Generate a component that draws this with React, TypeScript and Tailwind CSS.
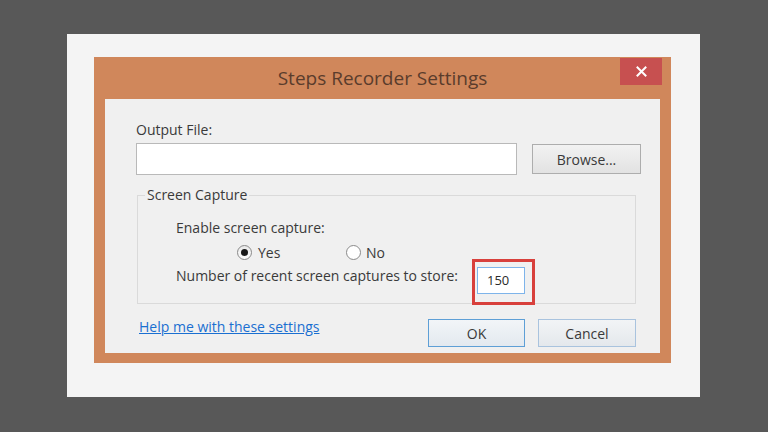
export default function App() {
  const font = { fontFamily: '"Open Sans", "Noto Sans", sans-serif' };

  return (
    <div
      className="w-[768px] h-[432px] bg-[#585858] pl-[67px] pt-[34px] text-[14px] text-[#3a3a3a]"
      style={font}
    >
      {/* Light page panel */}
      <div className="w-[633px] h-[363px] bg-[#f4f4f4] pl-[27px] pt-[23px]">
        {/* Dialog window */}
        <div className="w-[577px] h-[306px] bg-[#d0875b] flex flex-col px-[11px] pb-[10px]">
          {/* Title bar */}
          <div className="relative h-[42px] flex items-center justify-center">
            <span className="text-[19px] text-[#5a3c2c] leading-none">Steps Recorder Settings</span>
            <button className="absolute right-[-2px] top-[1px] w-[42px] h-[27px] bg-[#c75050] flex items-center justify-center">
              <svg width="11" height="11" viewBox="0 0 11 11">
                <path d="M1.5 1.5l8 8M9.5 1.5l-8 8" stroke="white" strokeWidth="2" strokeLinecap="square" />
              </svg>
            </button>
          </div>

          {/* Client area */}
          <div className="flex-1 bg-[#f0f0f0] pl-[31px] pt-[22px]">
            <div className="leading-[18px]">Output File:</div>
            <div className="mt-[4px] flex items-start gap-[15px]">
              <div className="w-[381px] h-[32px] bg-white border border-[#b9b9b9]" />
              <button className="mt-[1px] w-[109px] h-[30px] border border-[#adadad] bg-gradient-to-b from-[#f2f2f2] to-[#e2e2e2] text-[14px] text-[#3a3a3a]">
                Browse...
              </button>
            </div>

            {/* Group box */}
            <fieldset className="mt-[11px] ml-[1px] w-[499px] border border-[#dadada] pl-[38px] pt-[12px] pb-[9px]">
              <legend className="ml-[-31px] px-[2px] leading-[18px]">Screen Capture</legend>
              <div className="leading-[24px]">Enable screen capture:</div>
              <div className="flex items-center h-[24px] pl-[61px]">
                <div className="w-[109px] flex items-center gap-[6px]">
                  <span className="w-[15px] h-[15px] rounded-full border border-[#8a8a8a] bg-gradient-to-b from-[#e8e8e8] to-white flex items-center justify-center">
                    <span className="w-[7px] h-[7px] rounded-full bg-[#1a1a1a]" />
                  </span>
                  <span>Yes</span>
                </div>
                <div className="flex items-center gap-[5px]">
                  <span className="w-[15px] h-[15px] rounded-full border border-[#8a8a8a] bg-white" />
                  <span>No</span>
                </div>
              </div>
              <div className="flex items-start">
                <div className="w-[301px] leading-[24px]">Number of recent screen captures to store:</div>
                <div className="relative mt-[3px]">
                  <div className="w-[48px] h-[27px] bg-white border border-[#7eb4ea] pl-[9px] leading-[25px] text-[13px] text-[#2a2a2a]">
                    150
                  </div>
                  <div className="absolute left-[-5px] top-[-8px] w-[63px] h-[46px] border-[3px] border-[#d8403c]" />
                </div>
              </div>
            </fieldset>

            {/* Bottom row */}
            <div className="mt-[14px] w-[500px] flex items-start justify-between">
              <a className="ml-[3px] leading-[18px] text-[#1a6fd1] underline">Help me with these settings</a>
              <div className="mt-[1px] flex gap-[13px]">
                <button className="w-[97px] h-[28px] border border-[#5e9fd6] bg-gradient-to-b from-[#f2f5f8] to-[#e3e9ef] text-[14px] text-[#3a3a3a]">
                  OK
                </button>
                <button className="w-[98px] h-[28px] border border-[#a9c3de] bg-gradient-to-b from-[#f2f4f6] to-[#e4e8ec] text-[14px] text-[#3a3a3a]">
                  Cancel
                </button>
              </div>
            </div>
          </div>
        </div>
      </div>
    </div>
  );
}
